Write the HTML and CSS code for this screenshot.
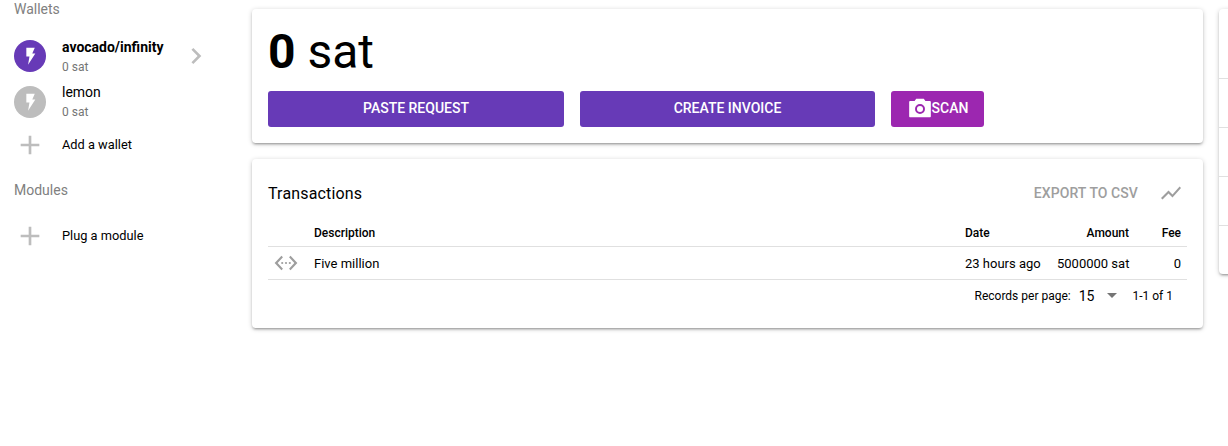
FILE: index.html
```html
<!DOCTYPE html>
<html lang="en">
<head>
<meta charset="utf-8">
<title>Wallet</title>
<link rel="stylesheet" href="styles.css">
</head>
<body>
<div class="page">
  <aside class="sidebar">
    <div class="section-title">Wallets</div>
    <ul class="menu wallets">
      <li class="wallet">
        <span class="avatar avatar-active"><svg viewBox="0 0 24 24" class="bolt"><path d="M8 3h9.2l-2.7 6.2h3.3L9.900 21.500l1.500-9H8z"/></svg></span>
        <span class="wallet-text"><span class="wallet-name wallet-name-active">avocado/infinity</span><span class="wallet-balance">0 sat</span></span>
        <svg class="chevron" viewBox="0 0 24 24"><path d="M8.600 16.600 13.200 12 8.600 7.400 10 6l6 6-6 6z"/></svg>
      </li>
      <li class="wallet">
        <span class="avatar avatar-idle"><svg viewBox="0 0 24 24" class="bolt"><path d="M8 3h9.2l-2.7 6.2h3.3L9.900 21.500l1.500-9H8z"/></svg></span>
        <span class="wallet-text"><span class="wallet-name">lemon</span><span class="wallet-balance">0 sat</span></span>
      </li>
      <li class="action action-add">
        <svg class="plus" viewBox="0 0 24 24"><path d="M19 13h-6v6h-2v-6H5v-2h6V5h2v6h6z"/></svg>
        <span>Add a wallet</span>
      </li>
    </ul>
    <div class="section-title modules-title">Modules</div>
    <ul class="menu modules">
      <li class="action">
        <svg class="plus" viewBox="0 0 24 24"><path d="M19 13h-6v6h-2v-6H5v-2h6V5h2v6h6z"/></svg>
        <span>Plug a module</span>
      </li>
    </ul>
  </aside>

  <main class="content">
    <section class="card balance-card">
      <div class="balance"><strong>0</strong> sat</div>
      <div class="buttons">
        <button class="btn btn-primary btn-paste">Paste Request</button>
        <button class="btn btn-primary btn-invoice">Create Invoice</button>
        <button class="btn btn-scan"><svg class="camera" viewBox="0 0 24 24"><path fill-rule="evenodd" d="M8.500 3.500 7 5.500H3C2.400 5.500 2 5.900 2 6.500v13c0 .6.4 1 1 1h18c.6 0 1-.4 1-1v-13c0-.6-.4-1-1-1h-4l-1.500-2zM12 8.400a4.600 4.600 0 1 1 0 9.200 4.600 4.600 0 0 1 0-9.200zm0 1.800a2.800 2.800 0 1 0 0 5.600 2.800 2.800 0 0 0 0-5.600z"/></svg>Scan</button>
      </div>
    </section>

    <section class="card tx-card">
      <div class="tx-head">
        <h2 class="tx-title">Transactions</h2>
        <span class="export">Export to CSV</span>
        <svg class="chart" viewBox="0 0 24 24"><path d="m3.500 18.490 6-6.010 4 4L22 6.920l-1.410-1.410-7.090 7.970-4-4L2 16.990z"/></svg>
      </div>
      <table class="tx-table">
        <colgroup>
          <col class="col-icon"><col class="col-desc"><col class="col-date"><col class="col-amount"><col class="col-fee">
        </colgroup>
        <thead>
          <tr><th></th><th>Description</th><th>Date</th><th class="num">Amount</th><th class="num">Fee</th></tr>
        </thead>
        <tbody>
          <tr>
            <td class="icon-cell"><svg class="pending" viewBox="0 0 24 24"><path d="M7.800 5.200 1.500 12l6.300 6.800 1.400-1.400L4.300 12l4.900-5.400zM16.200 5.200l-1.400 1.400 4.900 5.400-4.900 5.400 1.400 1.400 6.300-6.800z"/><circle cx="8.500" cy="12" r="1"/><circle cx="12" cy="12" r="1"/><circle cx="15.500" cy="12" r="1"/></svg></td>
            <td>Five million</td><td>23 hours ago</td><td class="num">5000000 sat</td><td class="num">0</td>
          </tr>
        </tbody>
      </table>
      <div class="pager">
        <span class="pager-label">Records per page:</span>
        <span class="pager-select">15</span>
        <span class="pager-arrow"></span>
        <span class="pager-range">1-1 of 1</span>
      </div>
    </section>
  </main>

  <aside class="card side-card">
    <div class="side-row side-row-first"></div>
    <div class="side-row"></div>
    <div class="side-row"></div>
    <div class="side-row"></div>
    <div class="side-row side-row-last"></div>
  </aside>
</div>
</body>
</html>
```
FILE: styles.css
```css
* { box-sizing: border-box; }
html, body { margin: 0; height: 100%; overflow: hidden; background: #fff; }
body { font-family: Roboto, "Liberation Sans", sans-serif; font-size: 14px; color: #000; }

.page { display: flex; align-items: flex-start; width: 1228px; height: 446px; overflow: hidden; }

.sidebar { width: 252px; flex: none; padding: 1px 0 0 14px; }
.section-title { height: 16px; line-height: 16px; font-size: 14px; color: #808080; }
.modules-title { margin-top: 16.75px; }
.menu { list-style: none; margin: 0; padding: 0; }
.wallets { margin-top: 16.25px; }
.modules { margin-top: 18.5px; }

.wallet { display: flex; align-items: center; height: 45.5px; }
.avatar { width: 32px; height: 32px; border-radius: 50%; display: flex; align-items: center; justify-content: center; flex: none; }
.avatar-active { background: #673ab7; }
.avatar-idle { background: #bdbdbd; }
.bolt { width: 22px; height: 22px; fill: #fff; }
.wallet-text { display: flex; flex-direction: column; margin: 1px 0 0 16px; width: 120px; }
.wallet-name { font-size: 14px; line-height: 20px; white-space: nowrap; }
.wallet-name-active { font-weight: 700; }
.wallet-balance { font-size: 12px; line-height: 19px; margin-top: 1px; color: #757575; }
.chevron { width: 32px; height: 32px; fill: #bdbdbd; margin-left: -2px; }

.action { display: flex; align-items: center; height: 38px; font-size: 12.8px; }
.action-add { height: 41px; }
.action span { margin-left: 16px; }
.plus { width: 32px; height: 32px; fill: #bdbdbd; flex: none; }

.content { width: 951px; flex: none; padding-top: 9px; display: flex; flex-direction: column; gap: 16px; }
.card { background: #fff; border-radius: 4px; box-shadow: 0 1px 5px rgba(0,0,0,.2), 0 2px 2px rgba(0,0,0,.14), 0 3px 1px -2px rgba(0,0,0,.12); }

.balance-card { height: 134px; padding: 15px 16px 0; }
.balance { font-size: 48px; line-height: 56px; height: 67px; }
.balance strong { font-weight: 700; }
.buttons { display: flex; gap: 16px; }
.btn { height: 36px; border: 0; border-radius: 3px; color: #fff; font: 500 14px/20px Roboto, sans-serif; text-transform: uppercase; padding: 0 0 2px; display: flex; align-items: center; justify-content: center; }
.btn-primary { background: #673ab7; }
.btn-paste { width: 296px; }
.btn-invoice { width: 295px; }
.btn-scan { width: 93px; background: #9c27b0; }
.camera { width: 26px; height: 26px; fill: #fff; flex: none; margin-right: -1px; }

.tx-card { height: 169px; padding: 0 16px; }
.tx-head { display: flex; align-items: center; height: 60px; padding-top: 8px; }
.tx-title { margin: 0; flex: 1; font-size: 16px; font-weight: 400; letter-spacing: .16px; }
.export { font-size: 14px; font-weight: 500; color: #9e9e9e; text-transform: uppercase; letter-spacing: .08px; }
.chart { width: 24px; height: 24px; fill: #9e9e9e; margin-left: 21px; margin-right: 4px; }

.tx-table { width: 100%; table-layout: fixed; border-collapse: collapse; font-size: 13px; }
.col-icon { width: 40px; }
.col-date { width: 92px; }
.col-amount { width: 84px; }
.col-fee { width: 52px; }
.tx-table th { height: 27px; padding: 2px 6px 0; font-size: 12px; font-weight: 500; text-align: left; border-bottom: 1px solid #e0e0e0; }
.tx-table td { height: 33px; padding: 2px 6px 0; border-bottom: 1px solid #e0e0e0; white-space: nowrap; }
.tx-table .num { text-align: right; }
.tx-table .icon-cell { padding: 0 0 0 6px; }
.pending { width: 26px; height: 26px; fill: #9e9e9e; display: block; margin-left: -1px; }

.pager { display: flex; align-items: center; justify-content: flex-end; height: 32px; font-size: 12px; padding-right: 14px; }
.pager-select { font-size: 14px; margin-left: 8px; }
.pager-arrow { width: 0; height: 0; border-left: 5px solid transparent; border-right: 5px solid transparent; border-top: 5px solid #757575; margin-left: 13px; }
.pager-range { margin-left: 15px; }

.side-card { width: 300px; flex: none; margin: 9px 0 0 16px; height: 265px; }
.side-row { height: 49px; border-bottom: 1px solid #e0e0e0; }
.side-row-first { height: 70px; }
.side-row-last { border-bottom: 0; }
```
